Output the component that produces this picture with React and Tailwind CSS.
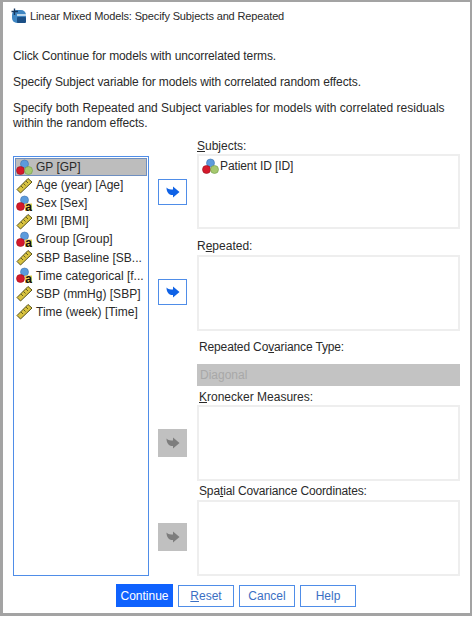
const font = { fontFamily: '"Liberation Sans", Arial, sans-serif' }

function Balls({ letter }) {
  return (
    <svg width="17" height="17" viewBox="0 0 17 17" className="shrink-0 overflow-visible">
      <circle cx="8.5" cy="5" r="4" fill="#5b9bdc" stroke="#3f74b0" strokeWidth="0.6" />
      <circle cx="4.5" cy="11.5" r="4" fill="#d5182b" stroke="#97121f" strokeWidth="0.6" />
      {!letter && <circle cx="12.5" cy="11.5" r="4" fill="#a6c86e" stroke="#6d9c49" strokeWidth="0.6" />}
      {letter && <rect x="9" y="8.5" width="7" height="7.5" fill="#e9cf55" />}
      {letter && (
        <text x="12.5" y="15.5" textAnchor="middle" fontSize="12" fontWeight="700" fill="#111" fontFamily="Liberation Sans">
          a
        </text>
      )}
    </svg>
  )
}

function Ruler() {
  return (
    <svg width="17" height="17" viewBox="0 0 17 17" className="shrink-0">
      <path d="M1 12.5 L12 1.5 L16 5 L4.5 16 Z" fill="#d8c23e" stroke="#57521c" strokeWidth="1" />
      <path d="M5 9 L7 11 M7.5 6.5 L9.5 8.5 M10 4 L12 6" stroke="#57521c" strokeWidth="0.9" />
    </svg>
  )
}

function VarIcon({ type }) {
  if (type === 'ruler') return <Ruler />
  if (type === 'nominal') return <Balls letter />
  return <Balls />
}

function Arrow({ color }) {
  return (
    <svg width="14" height="12" viewBox="0 0 14 12">
      <path d="M0.5 1.5 C2.5 3.5 4.5 3.5 7 3.5 L7 0.5 L13.5 6 L7 11.5 L7 9 C3.5 9.5 0.5 6.5 0.5 1.5 Z" fill={color} />
    </svg>
  )
}

function MoveButton({ disabled, className }) {
  return (
    <button
      className={`w-[29px] flex items-center justify-center ${
        disabled ? 'h-[28px] bg-[#c0c0c0]' : 'h-[26px] bg-white border-[1.5px] border-[#4f8de8]'
      } ${className}`}
    >
      <Arrow color={disabled ? '#7d7d7d' : '#0f62e6'} />
    </button>
  )
}

function Box({ className, children }) {
  return <div className={`bg-white border-2 border-[#eeeeee] ${className}`}>{children}</div>
}

const vars = [
  { type: 'scale', label: 'GP [GP]' },
  { type: 'ruler', label: 'Age (year) [Age]' },
  { type: 'nominal', label: 'Sex [Sex]' },
  { type: 'ruler', label: 'BMI [BMI]' },
  { type: 'nominal', label: 'Group [Group]' },
  { type: 'ruler', label: 'SBP Baseline [SB...' },
  { type: 'nominal', label: 'Time categorical [f...' },
  { type: 'ruler', label: 'SBP (mmHg) [SBP]' },
  { type: 'ruler', label: 'Time (week) [Time]' },
]

export default function App() {
  return (
    <div className="w-[474px] h-[619px] bg-white overflow-hidden text-[12px] text-[#2a2a2a]" style={font}>
      <div className="w-[472px] h-[616px] border-t-[2px] border-l-[3px] border-r-[2px] border-b-[3px] border-[#a3a3a3] bg-white flex flex-col">
        <div className="flex items-center h-[27px] pl-[8px] pt-[1px] gap-[3px]">
          <svg width="16" height="16" viewBox="0 0 16 16" className="shrink-0">
            <rect x="1" y="2" width="14" height="13" rx="5" fill="#3f86c2" />
            <rect x="6" y="9" width="9" height="6" rx="1" fill="#1b4f86" />
            <rect x="6" y="6" width="9" height="2" fill="#bcd7ec" />
            <path d="M3.5 0.5 V7 M0.5 3.5 H7" stroke="#14375f" strokeWidth="1.4" />
          </svg>
          <span className="text-[11px] tracking-[-0.14px]">Linear Mixed Models: Specify Subjects and Repeated</span>
        </div>

        <div className="pl-[10px] pr-[8px] pt-[20px]">
          <p className="leading-[14px] tracking-[-0.1px]">Click Continue for models with uncorrelated terms.</p>
          <p className="leading-[14px] mt-[12px] tracking-[-0.1px]">Specify Subject variable for models with correlated random effects.</p>
          <p className="leading-[15px] mt-[12px]">
            Specify both Repeated and Subject variables for models with correlated residuals
            <br />
            <span className="tracking-[-0.08px]">within the random effects.</span>
          </p>
        </div>

        <div className="flex pl-[10px] mt-[8px]">
          <div className="w-[136px] h-[420px] mt-[17px] border-[1.5px] border-[#4f8de8] p-[1px] shrink-0">
            {vars.map((v, i) => (
              <div
                key={v.label}
                className={`h-[18.1px] flex items-center gap-[3px] pl-[1px] whitespace-nowrap overflow-hidden ${
                  i === 0 ? 'bg-[#bdbdbd] outline outline-1 -outline-offset-1 outline-[#6f8fc0]' : ''
                }`}
              >
                <VarIcon type={v.type} />
                <span>{v.label}</span>
              </div>
            ))}
          </div>

          <div className="w-[29px] ml-[9px] flex flex-col shrink-0">
            <MoveButton className="mt-[40px]" />
            <MoveButton className="mt-[74px]" />
            <MoveButton disabled className="mt-[124px]" />
            <MoveButton disabled className="mt-[66px]" />
          </div>

          <div className="w-[263px] ml-[10px] flex flex-col shrink-0">
            <label className="leading-[14px] h-[14px]">
              <span className="underline">S</span>ubjects:
            </label>
            <Box className="h-[75px] mt-[1px] pt-[1px] pl-[3px]">
              <div className="flex items-center gap-[1px] h-[18px]">
                <Balls />
                <span className="tracking-[-0.1px]">Patient ID [ID]</span>
              </div>
            </Box>
            <label className="leading-[14px] h-[14px] mt-[10px]">
              R<span className="underline">e</span>peated:
            </label>
            <Box className="h-[76px] mt-[2px]" />
            <label className="leading-[14px] h-[14px] mt-[9px] pl-[2px] tracking-[-0.14px]">
              Repeated Co<span className="underline">v</span>ariance Type:
            </label>
            <div className="h-[22px] mt-[10px] bg-[#c3c3c3] text-[#a8a8a8] flex items-center pl-[3px]">Diagonal</div>
            <label className="leading-[14px] h-[14px] mt-[4px] pl-[2px]">
              <span className="underline">K</span>ronecker Measures:
            </label>
            <Box className="h-[76px] mt-[1px]" />
            <label className="leading-[14px] h-[14px] mt-[3px] pl-[2px] tracking-[-0.14px]">
              Spa<span className="underline">t</span>ial Covariance Coordinates:
            </label>
            <Box className="h-[76px] mt-[2px]" />
          </div>
        </div>

        <div className="flex pl-[113px] mt-[8px] gap-[5px] items-center">
          <button className="w-[57px] h-[23px] bg-[#0f62fe] text-white">Continue</button>
          <button className="w-[56px] h-[22px] bg-white border-[1.5px] border-[#4f8de8] text-[#3b6fc4]">
            <span className="underline">R</span>eset
          </button>
          <button className="w-[56px] h-[22px] bg-white border-[1.5px] border-[#4f8de8] text-[#3b6fc4]">Cancel</button>
          <button className="w-[56px] h-[22px] bg-white border-[1.5px] border-[#4f8de8] text-[#3b6fc4]">Help</button>
        </div>
      </div>
    </div>
  )
}
